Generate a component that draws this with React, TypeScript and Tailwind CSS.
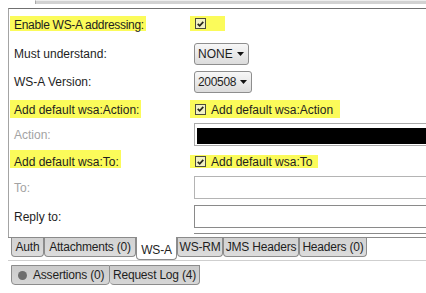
import React from "react";

function Check() {
  return (
    <span className="flex w-[11px] h-[11px] border border-[#4b4b3c] bg-[#f1f1c4] items-center justify-center shrink-0">
      <svg width="7" height="6" viewBox="0 0 7 6">
        <path d="M0.7 2.8 L2.7 4.8 L6.3 0.9" stroke="#26261c" strokeWidth="1.7" fill="none" />
      </svg>
    </span>
  );
}

function Arrow() {
  return (
    <svg width="7" height="4" viewBox="0 0 7 4">
      <path d="M0 0 H7 L3.5 4 Z" fill="#111" />
    </svg>
  );
}

export default function App() {
  return (
    <div className="w-[426px] h-[293px] bg-white overflow-hidden font-['Liberation_Sans',Arial,sans-serif] text-[12px] text-[#1e1e1e] leading-[14px]">
      {/* top strip */}
      <div className="h-[8px] flex">
        <div className="w-[35px]" />
        <div className="flex-1 h-[4px] border-l border-[#a8a8a8] bg-[#d2d2d2] border-t border-t-[#eeeeee]" />
      </div>

      {/* panel */}
      <div className="ml-[8px] h-[229px] border-l border-t border-l-[#a4a4a4] border-t-[#707070] flex flex-col">
        {/* Row 1 */}
        <div className="mt-[7px] h-[15px] flex">
          <div className="w-[181px] flex">
            <span className="ml-[1px] h-[15px] pl-[4px] pr-[2px] pt-[3px] bg-[#fbfb5a] flex items-center tracking-[-0.3px]">
              Enable WS-A addressing:
            </span>
          </div>
          <div className="w-[35px] h-[15px] bg-[#fbfb5a] pl-[5px] pt-[2px]">
            <Check />
          </div>
        </div>

        {/* Row 2 */}
        <div className="mt-[12px] h-[22px] flex items-center">
          <div className="w-[181px] pl-[5px]">Must understand:</div>
          <div className="ml-[4px] w-[55px] h-[22px] rounded-[3px] border border-[#8e8e8e] bg-linear-to-b from-[#f7f7f7] to-[#dcdcdc] flex items-center justify-between pl-[3px] pr-[4px]">
            <span>NONE</span>
            <Arrow />
          </div>
        </div>

        {/* Row 3 */}
        <div className="mt-[6px] h-[22px] flex items-center">
          <div className="w-[181px] pl-[5px]">WS-A Version:</div>
          <div className="ml-[4px] w-[58px] h-[22px] rounded-[3px] border border-[#8e8e8e] bg-linear-to-b from-[#f7f7f7] to-[#dcdcdc] flex items-center justify-between pl-[3px] pr-[4px]">
            <span className="tracking-[-0.3px]">200508</span>
            <Arrow />
          </div>
        </div>

        {/* Row 4 */}
        <div className="mt-[7px] h-[18px] flex">
          <div className="w-[181px] flex">
            <span className="ml-[1px] h-[18px] pl-[4px] pr-[2px] pt-[2px] bg-[#fbfb5a] flex items-center">
              Add default wsa:Action:
            </span>
          </div>
          <div className="h-[18px] bg-[#fbfb5a] pl-[5px] pr-[7px] flex items-center gap-[5px]">
            <Check />
            <span className="pt-[1px]">Add default wsa:Action</span>
          </div>
        </div>

        {/* Row 5 */}
        <div className="mt-[5px] h-[23px] flex items-center">
          <div className="w-[181px] pl-[5px] text-[#a3a3a3]">Action:</div>
          <div className="ml-[4px] flex-1 h-[23px] border border-r-0 border-[#ababab] pt-[4px] pb-[1px] pl-[2px] flex">
            <div className="flex-1 bg-black" />
          </div>
        </div>

        {/* Row 6 */}
        <div className="mt-[4px] h-[18px] flex">
          <div className="w-[181px] flex">
            <span className="ml-[1px] h-[18px] pl-[4px] pr-[2px] pt-[5px] bg-[#fbfb5a] flex items-center">
              Add default wsa:To:
            </span>
          </div>
          <div className="mt-[5px] h-[13px] bg-[#fbfb5a] pl-[5px] pr-[6px] flex items-center gap-[5px]">
            <Check />
            <span className="pt-[1px]">Add default wsa:To</span>
          </div>
        </div>

        {/* Row 7 */}
        <div className="mt-[8px] h-[23px] flex items-center">
          <div className="w-[181px] pl-[5px] text-[#a3a3a3]">To:</div>
          <div className="ml-[4px] flex-1 h-[23px] border border-r-0 border-[#b4b4b4]" />
        </div>

        {/* Row 8 */}
        <div className="mt-[6px] h-[23px] flex items-center">
          <div className="w-[181px] pl-[5px]">Reply to:</div>
          <div className="ml-[4px] flex-1 h-[23px] border border-r-0 border-[#8a8a8a]" />
        </div>

        <div className="mt-[5px] ml-[185px] border-t border-[#8a8a8a]" />
      </div>

      {/* tab strip */}
      <div className="ml-[8px] h-[24px] border-t border-[#8a8a8a] border-b border-b-[#cfcfcf] flex pl-[3px] items-start whitespace-nowrap tracking-[-0.2px]">
        <div className="w-[33px] h-[19px] border border-t-0 border-[#8c8c8c] rounded-b-[4px] bg-linear-to-b from-[#d2d2d2] to-[#dcdcdc] flex items-center justify-center">
          Auth
        </div>
        <div className="w-[92px] h-[19px] border border-t-0 border-[#8c8c8c] rounded-b-[4px] bg-linear-to-b from-[#d2d2d2] to-[#dcdcdc] flex items-center justify-center">
          Attachments (0)
        </div>
        <div className="-mt-[1px] w-[41px] h-[23px] border border-t-0 border-[#8c8c8c] rounded-b-[4px] bg-white flex items-center justify-center pt-[3px]">
          WS-A
        </div>
        <div className="w-[46px] h-[19px] border border-t-0 border-[#8c8c8c] rounded-b-[4px] bg-linear-to-b from-[#d2d2d2] to-[#dcdcdc] flex items-center justify-center">
          WS-RM
        </div>
        <div className="w-[76px] h-[19px] border border-t-0 border-[#8c8c8c] rounded-b-[4px] bg-linear-to-b from-[#d2d2d2] to-[#dcdcdc] flex items-center justify-center">
          JMS Headers
        </div>
        <div className="w-[68px] h-[19px] border border-t-0 border-[#8c8c8c] rounded-b-[4px] bg-linear-to-b from-[#d2d2d2] to-[#dcdcdc] flex items-center justify-center">
          Headers (0)
        </div>
      </div>

      {/* bottom tabs */}
      <div className="mt-[4px] ml-[11px] flex whitespace-nowrap tracking-[-0.2px]">
        <div className="w-[99px] h-[20px] border border-[#8c8c8c] rounded-b-[4px] bg-linear-to-b from-[#cbcbcb] to-[#d6d6d6] flex items-center pl-[6px] gap-[6px]">
          <span className="w-[9px] h-[9px] rounded-full bg-[#6e6e6e] shrink-0" />
          <span>Assertions (0)</span>
        </div>
        <div className="w-[90px] h-[20px] border border-l-0 border-[#8c8c8c] rounded-b-[4px] bg-linear-to-b from-[#cbcbcb] to-[#d6d6d6] flex items-center justify-center">
          Request Log (4)
        </div>
      </div>
    </div>
  );
}
